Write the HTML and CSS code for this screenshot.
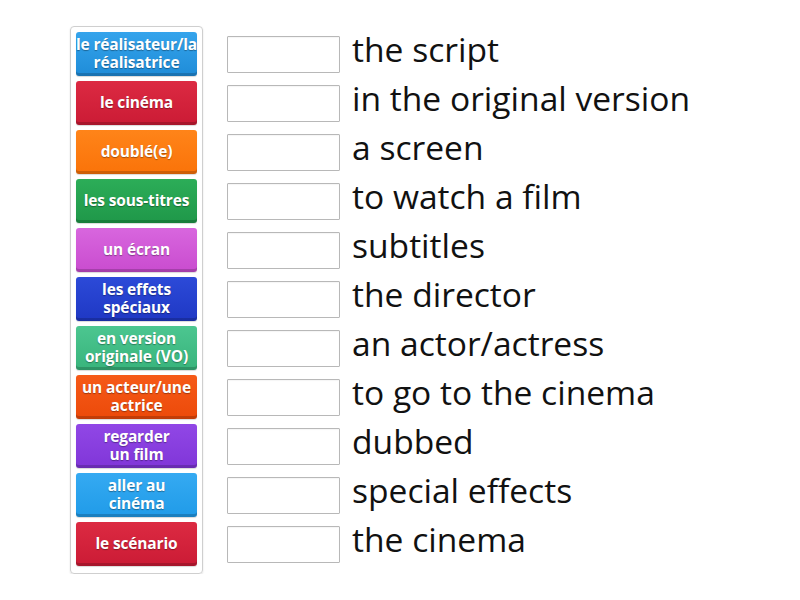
FILE: index.html
```html
<!DOCTYPE html>
<html lang="fr">
<head>
<meta charset="utf-8">
<title>Match up</title>
<link rel="stylesheet" href="styles.css">
</head>
<body>
<div class="game">
  <div class="bank">
    <div class="tile c-blue">le réalisateur/la<br>réalisatrice</div>
    <div class="tile c-red">le cinéma</div>
    <div class="tile c-orange">doublé(e)</div>
    <div class="tile c-green">les sous-titres</div>
    <div class="tile c-pink">un écran</div>
    <div class="tile c-navy">les effets<br>spéciaux</div>
    <div class="tile c-teal">en version<br>originale (VO)</div>
    <div class="tile c-vermilion">un acteur/une<br>actrice</div>
    <div class="tile c-purple">regarder<br>un film</div>
    <div class="tile c-sky">aller au<br>cinéma</div>
    <div class="tile c-red">le scénario</div>
  </div>
  <div class="targets">
    <div class="row"><div class="slot"></div><span class="label">the script</span></div>
    <div class="row"><div class="slot"></div><span class="label">in the original version</span></div>
    <div class="row"><div class="slot"></div><span class="label">a screen</span></div>
    <div class="row"><div class="slot"></div><span class="label">to watch a film</span></div>
    <div class="row"><div class="slot"></div><span class="label">subtitles</span></div>
    <div class="row"><div class="slot"></div><span class="label">the director</span></div>
    <div class="row"><div class="slot"></div><span class="label">an actor/actress</span></div>
    <div class="row"><div class="slot"></div><span class="label">to go to the cinema</span></div>
    <div class="row"><div class="slot"></div><span class="label">dubbed</span></div>
    <div class="row"><div class="slot"></div><span class="label">special effects</span></div>
    <div class="row"><div class="slot"></div><span class="label">the cinema</span></div>
  </div>
</div>
</body>
</html>
```
FILE: styles.css
```css
html, body {
  margin: 0;
  padding: 0;
  background: #ffffff;
}
body {
  font-family: "Open Sans", "Liberation Sans", sans-serif;
}
.game {
  display: flex;
  align-items: flex-start;
  padding: 26px 0 0 70px;
}
.bank {
  display: flex;
  flex-direction: column;
  gap: 5px;
  padding: 5px 5px 7px 5px;
  border: 1px solid #cfcfcf;
  border-radius: 4px;
  box-shadow: 0 1px 2px rgba(0,0,0,0.12);
}
.tile {
  box-sizing: border-box;
  width: 121px;
  height: 44px;
  border-radius: 3px;
  display: flex;
  align-items: center;
  justify-content: center;
  text-align: center;
  color: #ffffff;
  font-weight: 700;
  font-size: 15.5px;
  line-height: 18px;
  letter-spacing: -0.15px;
  white-space: nowrap;
  padding: 0 0 3px;
  text-shadow: 0 1px 1px rgba(0,0,0,0.35);
  box-shadow: inset 0 -3px 0 rgba(0,0,0,0.18), 0 1px 1px rgba(0,0,0,0.15);
}
.c-blue { background: linear-gradient(#35a4ec, #1f8cd8); }
.c-red { background: linear-gradient(#dc2a42, #cb1b35); }
.c-orange { background: linear-gradient(#ff8419, #fa7309); }
.c-green { background: linear-gradient(#2cad58, #1f9749); }
.c-pink { background: linear-gradient(#d866de, #c94ccf); }
.c-navy { background: linear-gradient(#2c4ad8, #1f38c4); }
.c-teal { background: linear-gradient(#4cc690, #38b47c); }
.c-vermilion { background: linear-gradient(#f65a18, #ec4a0a); }
.c-purple { background: linear-gradient(#9147e6, #8036d8); }
.c-sky { background: linear-gradient(#35aaf2, #209be8); }
.targets {
  display: flex;
  flex-direction: column;
  gap: 5px;
  margin-left: 24px;
  padding-top: 6px;
}
.row {
  height: 44px;
  display: flex;
  align-items: center;
}
.slot {
  box-sizing: border-box;
  width: 113px;
  height: 37px;
  border: 1px solid #b8b8b8;
  border-radius: 1px;
  background: #ffffff;
  box-shadow: inset 0 1px 1px rgba(0,0,0,0.04);
}
.label {
  margin-left: 12px;
  font-size: 33.6px;
  color: #111111;
  padding-bottom: 10px;
  white-space: nowrap;
}
```
